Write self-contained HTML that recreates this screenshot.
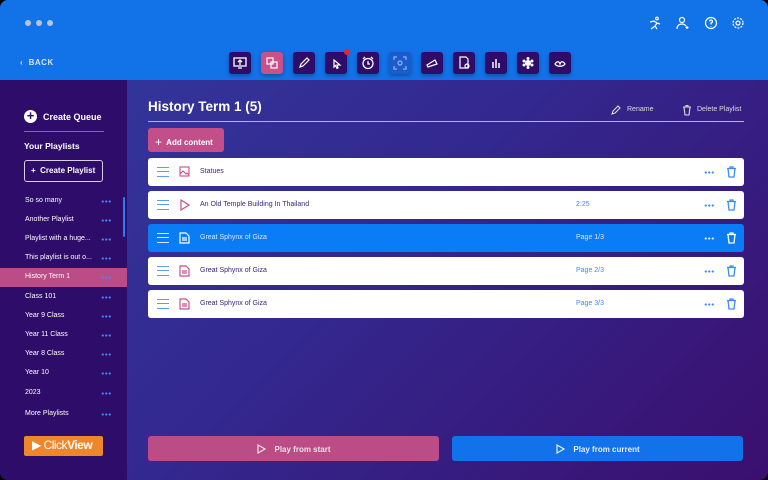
<!DOCTYPE html>
<html><head><meta charset="utf-8"><style>
*{box-sizing:border-box;margin:0;padding:0}
body{width:768px;height:480px;background:#000;font-family:"Liberation Sans",sans-serif;overflow:hidden;position:relative}
.win{position:absolute;left:0;top:0;width:768px;height:480px;border-radius:8px;overflow:hidden;background:linear-gradient(135deg,#333a9f 0%,#33288f 50%,#3a0f6e 100%)}
.hdr{position:absolute;left:0;top:0;width:768px;height:80px;background:#1273e8}
.dot{position:absolute;top:20px;width:6px;height:6px;border-radius:50%;background:#b9c3de}
.back{position:absolute;left:20px;top:58px;color:#d7e2f5;font-size:8px;font-weight:bold;letter-spacing:.5px}
.tb{position:absolute;top:52px;width:22px;height:22px;border-radius:3px;background:#2e0c6a;box-shadow:0 2px 4px rgba(0,0,0,.3)}
.tb svg{position:absolute;left:4px;top:4px}
.side{position:absolute;left:0;top:80px;width:127px;height:400px;background:#2e0c69}
.s{position:absolute;left:25px;color:#fff;font-size:7px}
.dots{position:absolute;width:10.5px;height:3px;background:radial-gradient(circle,#3d8af7 0.9px,transparent 1.3px) 0 0/3.5px 3px repeat-x}
.sd{left:101px}
.row{position:absolute;left:148px;width:596px;height:28px;background:#fff;border-radius:3px}
.row .t{position:absolute;left:52px;top:10px;font-size:7px;color:#3c2577}
.row .m{position:absolute;left:428px;top:10px;font-size:7px;color:#3d8af7}
.row .dots{left:556px;top:13px}
.ham{position:absolute;left:9px;top:9px;width:12px;height:10px;border-top:1.5px solid #5b9cf5;border-bottom:1.5px solid #5b9cf5}
.ham:after{content:"";position:absolute;left:0;top:3px;width:12px;border-top:1.5px solid #5b9cf5}
.sel{background:#0a7cf5}.sel .t,.sel .m{color:#dce9ff}
.sel .dots{background:radial-gradient(circle,#dce9ff 0.9px,transparent 1.3px) 0 0/3.5px 3px repeat-x}
.sel .ham,.sel .ham:after{border-color:#dce9ff}
</style></head><body><div class="win">
<div class="hdr">
<div class="dot" style="left:25px"></div><div class="dot" style="left:36px"></div><div class="dot" style="left:47px"></div>
<div class="back">‹&nbsp;&nbsp;BACK</div>
<div class="tb" style="left:229px"><svg width="14" height="14" fill="none" stroke="#fff" stroke-width="1.3"><rect x="1" y="2" width="12" height="8"/><path d="M7 9V4M5 6l2-2 2 2M5 12h4"/></svg></div>
<div class="tb" style="left:261px;background:#c9508a"><svg width="14" height="14" fill="none" stroke="#fff" stroke-width="1.2"><rect x="2" y="2" width="6" height="6"/><rect x="6" y="6" width="6" height="6"/></svg></div>
<div class="tb" style="left:293px"><svg width="14" height="14" fill="none" stroke="#fff" stroke-width="1.2"><path d="M3 11l1-3 6-6 2 2-6 6z"/></svg></div>
<div class="tb" style="left:325px"><svg width="14" height="14" fill="none" stroke="#fff" stroke-width="1.2"><path d="M5 4l6 5-3 0 1 3-1 .5-1.5-3L5 11z"/></svg><div style="position:absolute;right:-3px;top:-3px;width:6px;height:6px;border-radius:50%;background:#f0202e"></div></div>
<div class="tb" style="left:357px"><svg width="14" height="14" fill="none" stroke="#fff" stroke-width="1.3"><circle cx="7" cy="7.5" r="5"/><path d="M7 5v3h2M2 3l2-2M12 3l-2-2"/></svg></div>
<div class="tb" style="left:389px;background:#1a5ccc"><svg width="14" height="14" fill="none" stroke="#8fb3f0" stroke-width="1.2"><path d="M1 4V1h3M10 1h3v3M13 10v3h-3M4 13H1v-3"/><circle cx="7" cy="7" r="2"/></svg></div>
<div class="tb" style="left:421px"><svg width="14" height="14" fill="none" stroke="#fff" stroke-width="1.2"><path d="M2 9l8-5 2 4-9 3z"/></svg></div>
<div class="tb" style="left:453px"><svg width="14" height="14" fill="none" stroke="#fff" stroke-width="1.2"><path d="M3 1h6l2 2v9H3z"/><circle cx="10" cy="10" r="2"/></svg></div>
<div class="tb" style="left:485px"><svg width="14" height="14" stroke="#fff" stroke-width="1.5"><path d="M4 12V6M7 12V3M10 12V7"/></svg></div>
<div class="tb" style="left:517px"><svg width="14" height="14" fill="#fff"><circle cx="7" cy="7" r="3"/><circle cx="7" cy="2.5" r="1.5"/><circle cx="7" cy="11.5" r="1.5"/><circle cx="3" cy="5" r="1.5"/><circle cx="11" cy="5" r="1.5"/><circle cx="3" cy="9" r="1.5"/><circle cx="11" cy="9" r="1.5"/></svg></div>
<div class="tb" style="left:549px"><svg width="14" height="14" fill="none" stroke="#fff" stroke-width="1.2"><path d="M2 8c2-3 4-3 5 0 1-3 3-3 5 0-2 3-8 3-10 0z"/></svg></div>
<svg style="position:absolute;left:648px;top:16px" width="14" height="14" fill="none" stroke="#fff" stroke-width="1.2"><circle cx="9" cy="2.5" r="1.3"/><path d="M2 6l4-1 3 2-2 3 2 3M7 10l-4 3M9 7l3 1"/></svg>
<svg style="position:absolute;left:676px;top:16px" width="14" height="14" fill="none" stroke="#fff" stroke-width="1.2"><circle cx="6" cy="4" r="2.5"/><path d="M1 13c0-4 3-5 5-5s3 .5 4 2M11 10v3M9.5 11.5h3"/></svg>
<svg style="position:absolute;left:704px;top:16px" width="14" height="14" fill="none" stroke="#fff" stroke-width="1.2"><circle cx="7" cy="7" r="5.5"/><path d="M5.5 5.5a1.5 1.5 0 1 1 1.5 1.5v1.5M7 10v.5"/></svg>
<svg style="position:absolute;left:731px;top:16px" width="14" height="14" fill="none" stroke="#fff" stroke-width="1.2"><circle cx="7" cy="7" r="2"/><circle cx="7" cy="7" r="5" stroke-dasharray="2 1.2"/></svg>
</div>
<div class="side">
<div style="position:absolute;left:24px;top:30px;width:13px;height:13px;border-radius:50%;background:#fff;color:#2e0c69;font-size:13px;line-height:12px;text-align:center;font-weight:bold">+</div>
<div style="position:absolute;left:43px;top:32px;color:#fff;font-size:9px;font-weight:bold">Create Queue</div>
<div style="position:absolute;left:24px;top:51px;width:80px;border-top:1px solid #7d6aa8"></div>
<div style="position:absolute;left:24px;top:61px;color:#fff;font-size:8.5px;font-weight:bold">Your Playlists</div>
<div style="position:absolute;left:24px;top:80px;width:79px;height:22px;border:1.3px solid #d6cfe6;border-radius:3px;color:#fff;font-size:8px;font-weight:bold;padding:5px 0 0 6px">+&nbsp; Create Playlist</div>
<div style="position:absolute;left:123px;top:117px;width:2px;height:40px;background:#2d7cf0;border-radius:1px"></div>
<div style="position:absolute;left:0;top:188px;width:127px;height:19px;background:#bc4c87"></div>
<div class="s" style="top:117px">So so many</div><div class="dots sd" style="top:120px"></div>
<div class="s" style="top:136px">Another Playlist</div><div class="dots sd" style="top:139px"></div>
<div class="s" style="top:155px">Playlist with a huge...</div><div class="dots sd" style="top:158px"></div>
<div class="s" style="top:174px">This playlist is out o...</div><div class="dots sd" style="top:177px"></div>
<div class="s" style="top:193px">History Term 1</div><div class="dots sd" style="top:196px"></div>
<div class="s" style="top:213px">Class 101</div><div class="dots sd" style="top:216px"></div>
<div class="s" style="top:232px">Year 9 Class</div><div class="dots sd" style="top:235px"></div>
<div class="s" style="top:251px">Year 11 Class</div><div class="dots sd" style="top:254px"></div>
<div class="s" style="top:270px">Year 8 Class</div><div class="dots sd" style="top:273px"></div>
<div class="s" style="top:289px">Year 10</div><div class="dots sd" style="top:292px"></div>
<div class="s" style="top:309px">2023</div><div class="dots sd" style="top:312px"></div>
<div class="s" style="top:330px">More Playlists</div><div class="dots sd" style="top:333px"></div>
<div style="position:absolute;left:24px;top:356px;width:79px;height:20px;background:#f0862a;border-radius:2px;color:#fff;font-size:12px;padding:2px 0 0 8px;letter-spacing:-0.5px">▶ Click<b>View</b></div>
</div>
<div style="position:absolute;left:148px;top:99px;color:#fff;font-size:13.5px;font-weight:bold">History Term 1 (5)</div>
<div style="position:absolute;left:148px;top:121px;width:596px;border-top:1px solid #b8b3dd"></div>
<svg style="position:absolute;left:610px;top:104px" width="12" height="12" fill="none" stroke="#ddd" stroke-width="1.1"><path d="M2 10l1-3 5-5 2 2-5 5z"/></svg>
<div style="position:absolute;left:627px;top:106px;color:#ddd;font-size:7px">Rename</div>
<svg style="position:absolute;left:681px;top:104px" width="12" height="12" fill="none" stroke="#ddd" stroke-width="1.1"><path d="M2 3h8M3 3l1 8h4l1-8M5 3V1.5h2V3"/></svg>
<div style="position:absolute;left:697px;top:106px;color:#ddd;font-size:7px">Delete Playlist</div>
<div style="position:absolute;left:148px;top:128px;width:76px;height:24px;background:#c24f89;border-radius:3px;color:#fff;font-size:8px;font-weight:bold;padding:6px 0 0 7px"><span style="font-size:12px;font-weight:normal;position:relative;top:1px">+</span>&nbsp; Add content</div>

<div class="row" style="top:158px"><div class="ham"></div><svg style="position:absolute;left:31px;top:8px" width="11" height="11" fill="none" stroke="#c94f8a" stroke-width="1.1"><rect x="1" y="1" width="9" height="9"/><path d="M1 8l3-3 3 3 1-1 2 2"/></svg><div class="t">Statues</div><div class="dots"></div><svg style="position:absolute;left:578px;top:8px" width="11" height="12" fill="none" stroke="#3d8af7" stroke-width="1.3"><path d="M1 2.5h9M2 2.5l1 8.5h5l1-8.5M4 2.5V1h3v1.5"/></svg></div>
<div class="row" style="top:191px"><div class="ham"></div><svg style="position:absolute;left:31px;top:8px" width="11" height="12" fill="none" stroke="#c94f8a" stroke-width="1.2"><path d="M2 1l8 5-8 5z"/></svg><div class="t">An Old Temple Building In Thailand</div><div class="m">2:25</div><div class="dots"></div><svg style="position:absolute;left:578px;top:8px" width="11" height="12" fill="none" stroke="#3d8af7" stroke-width="1.3"><path d="M1 2.5h9M2 2.5l1 8.5h5l1-8.5M4 2.5V1h3v1.5"/></svg></div>
<div class="row sel" style="top:224px"><div class="ham"></div><svg style="position:absolute;left:31px;top:8px" width="11" height="12" fill="none" stroke="#fff" stroke-width="1.2"><path d="M1 1h6l3 3v7H1z"/><path d="M3 6h5M3 8h5"/></svg><div class="t">Great Sphynx of Giza</div><div class="m">Page 1/3</div><div class="dots"></div><svg style="position:absolute;left:578px;top:8px" width="11" height="12" fill="none" stroke="#fff" stroke-width="1.3"><path d="M1 2.5h9M2 2.5l1 8.5h5l1-8.5M4 2.5V1h3v1.5"/></svg></div>
<div class="row" style="top:257px"><div class="ham"></div><svg style="position:absolute;left:31px;top:8px" width="11" height="12" fill="none" stroke="#c94f8a" stroke-width="1.2"><path d="M1 1h6l3 3v7H1z"/><path d="M3 6h5M3 8h5"/></svg><div class="t">Great Sphynx of Giza</div><div class="m">Page 2/3</div><div class="dots"></div><svg style="position:absolute;left:578px;top:8px" width="11" height="12" fill="none" stroke="#3d8af7" stroke-width="1.3"><path d="M1 2.5h9M2 2.5l1 8.5h5l1-8.5M4 2.5V1h3v1.5"/></svg></div>
<div class="row" style="top:290px"><div class="ham"></div><svg style="position:absolute;left:31px;top:8px" width="11" height="12" fill="none" stroke="#c94f8a" stroke-width="1.2"><path d="M1 1h6l3 3v7H1z"/><path d="M3 6h5M3 8h5"/></svg><div class="t">Great Sphynx of Giza</div><div class="m">Page 3/3</div><div class="dots"></div><svg style="position:absolute;left:578px;top:8px" width="11" height="12" fill="none" stroke="#3d8af7" stroke-width="1.3"><path d="M1 2.5h9M2 2.5l1 8.5h5l1-8.5M4 2.5V1h3v1.5"/></svg></div>

<div style="position:absolute;left:148px;top:436px;width:291px;height:25px;background:#bb4c86;border-radius:3px;color:#f0e0ec;font-size:8px;font-weight:bold;text-align:center;padding-top:8px"><svg width="10" height="10" fill="none" stroke="#f0e0ec" stroke-width="1.2" style="vertical-align:-2px;margin-right:8px"><path d="M2 1l7 4-7 4z"/></svg>Play from start</div>
<div style="position:absolute;left:452px;top:436px;width:291px;height:25px;background:#1172e9;border-radius:3px;color:#e6effc;font-size:8px;font-weight:bold;text-align:center;padding-top:8px"><svg width="10" height="10" fill="none" stroke="#e6effc" stroke-width="1.2" style="vertical-align:-2px;margin-right:8px"><path d="M2 1l7 4-7 4z"/></svg>Play from current</div>
</div></body></html>
